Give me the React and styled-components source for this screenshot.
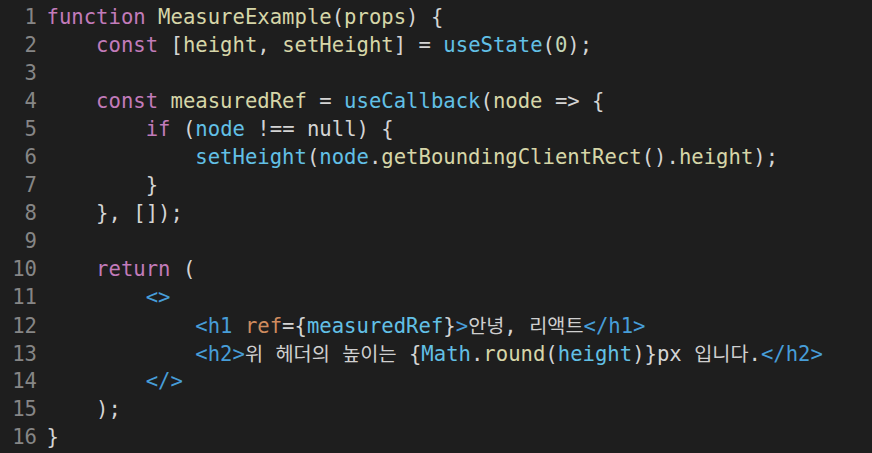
import React from "react";
import styled, { createGlobalStyle } from "styled-components";

const Global = createGlobalStyle`
  html, body { margin: 0; padding: 0; background: #1e1e1e; }
  body { width: 872px; height: 453px; overflow: hidden; }
`;

const COLORS = {
  kw: "#c27bba",
  fn: "#d6d6a8",
  var: "#62c0e6",
  tag: "#479dd8",
  attr: "#cf8b5e",
  plain: "#d4d4d4",
  num: "#c4d6b6",
};

const Editor = styled.div`
  box-sizing: border-box;
  width: 872px;
  height: 453px;
  background: #1e1e1e;
  padding-top: 3px;
  display: flex;
  flex-direction: column;
  font-family: "DejaVu Sans Mono", "Noto Sans CJK KR", monospace;
  font-size: 20.6px;
  line-height: 28px;
`;

const Line = styled.div`
  display: flex;
  height: 28px;
  align-items: baseline;
`;

const LineNo = styled.span`
  width: 37px;
  flex: none;
  text-align: right;
  color: #868686;
`;

const Code = styled.span`
  margin-left: 9.5px;
  white-space: pre;
  color: ${COLORS.plain};
`;

const Tok = styled.span`
  color: ${(p) => COLORS[p.$t] || COLORS.plain};
`;

const Ko = styled.span`
  font-family: "Noto Sans CJK KR", "DejaVu Sans Mono", sans-serif;
  font-size: 19.7px;
  color: #cfcfcf;
`;

const sp = (n) => " ".repeat(n);

const LINES = [
  [["kw", "function"], ["plain", " "], ["fn", "MeasureExample"], ["plain", "("], ["fn", "props"], ["plain", ") {"]],
  [["plain", sp(4)], ["kw", "const"], ["plain", " ["], ["fn", "height"], ["plain", ", "], ["fn", "setHeight"], ["plain", "] = "], ["var", "useState"], ["plain", "("], ["num", "0"], ["plain", ");"]],
  [],
  [["plain", sp(4)], ["kw", "const"], ["plain", " "], ["fn", "measuredRef"], ["plain", " = "], ["var", "useCallback"], ["plain", "("], ["fn", "node"], ["plain", " => {"]],
  [["plain", sp(8)], ["kw", "if"], ["plain", " ("], ["var", "node"], ["plain", " !== null) {"]],
  [["plain", sp(12)], ["var", "setHeight"], ["plain", "("], ["var", "node"], ["plain", "."], ["fn", "getBoundingClientRect"], ["plain", "()."], ["fn", "height"], ["plain", ");"]],
  [["plain", sp(8) + "}"]],
  [["plain", sp(4) + "}, []);"]],
  [],
  [["plain", sp(4)], ["kw", "return"], ["plain", " ("]],
  [["plain", sp(8)], ["tag", "<>"]],
  [["plain", sp(12)], ["tag", "<h1"], ["plain", " "], ["attr", "ref"], ["plain", "={"], ["var", "measuredRef"], ["plain", "}"], ["tag", ">"], ["ko", "안녕"], ["plain", ", "], ["ko", "리액트"], ["tag", "</h1>"]],
  [["plain", sp(12)], ["tag", "<h2>"], ["ko", "위"], ["plain", " "], ["ko", "헤더의"], ["plain", " "], ["ko", "높이는"], ["plain", " {"], ["var", "Math"], ["plain", "."], ["fn", "round"], ["plain", "("], ["var", "height"], ["plain", ")}px "], ["ko", "입니다"], ["plain", "."], ["tag", "</h2>"]],
  [["plain", sp(8)], ["tag", "</>"]],
  [["plain", sp(4) + ");"]],
  [["plain", "}"]],
];

export default function App() {
  return (
    <>
      <Global />
      <Editor>
        {LINES.map((toks, i) => (
          <Line key={i}>
            <LineNo>{i + 1}</LineNo>
            <Code>
              {toks.length === 0
                ? " "
                : toks.map(([t, s], j) =>
                    t === "ko" ? <Ko key={j}>{s}</Ko> : <Tok key={j} $t={t}>{s}</Tok>
                  )}
            </Code>
          </Line>
        ))}
      </Editor>
    </>
  );
}
